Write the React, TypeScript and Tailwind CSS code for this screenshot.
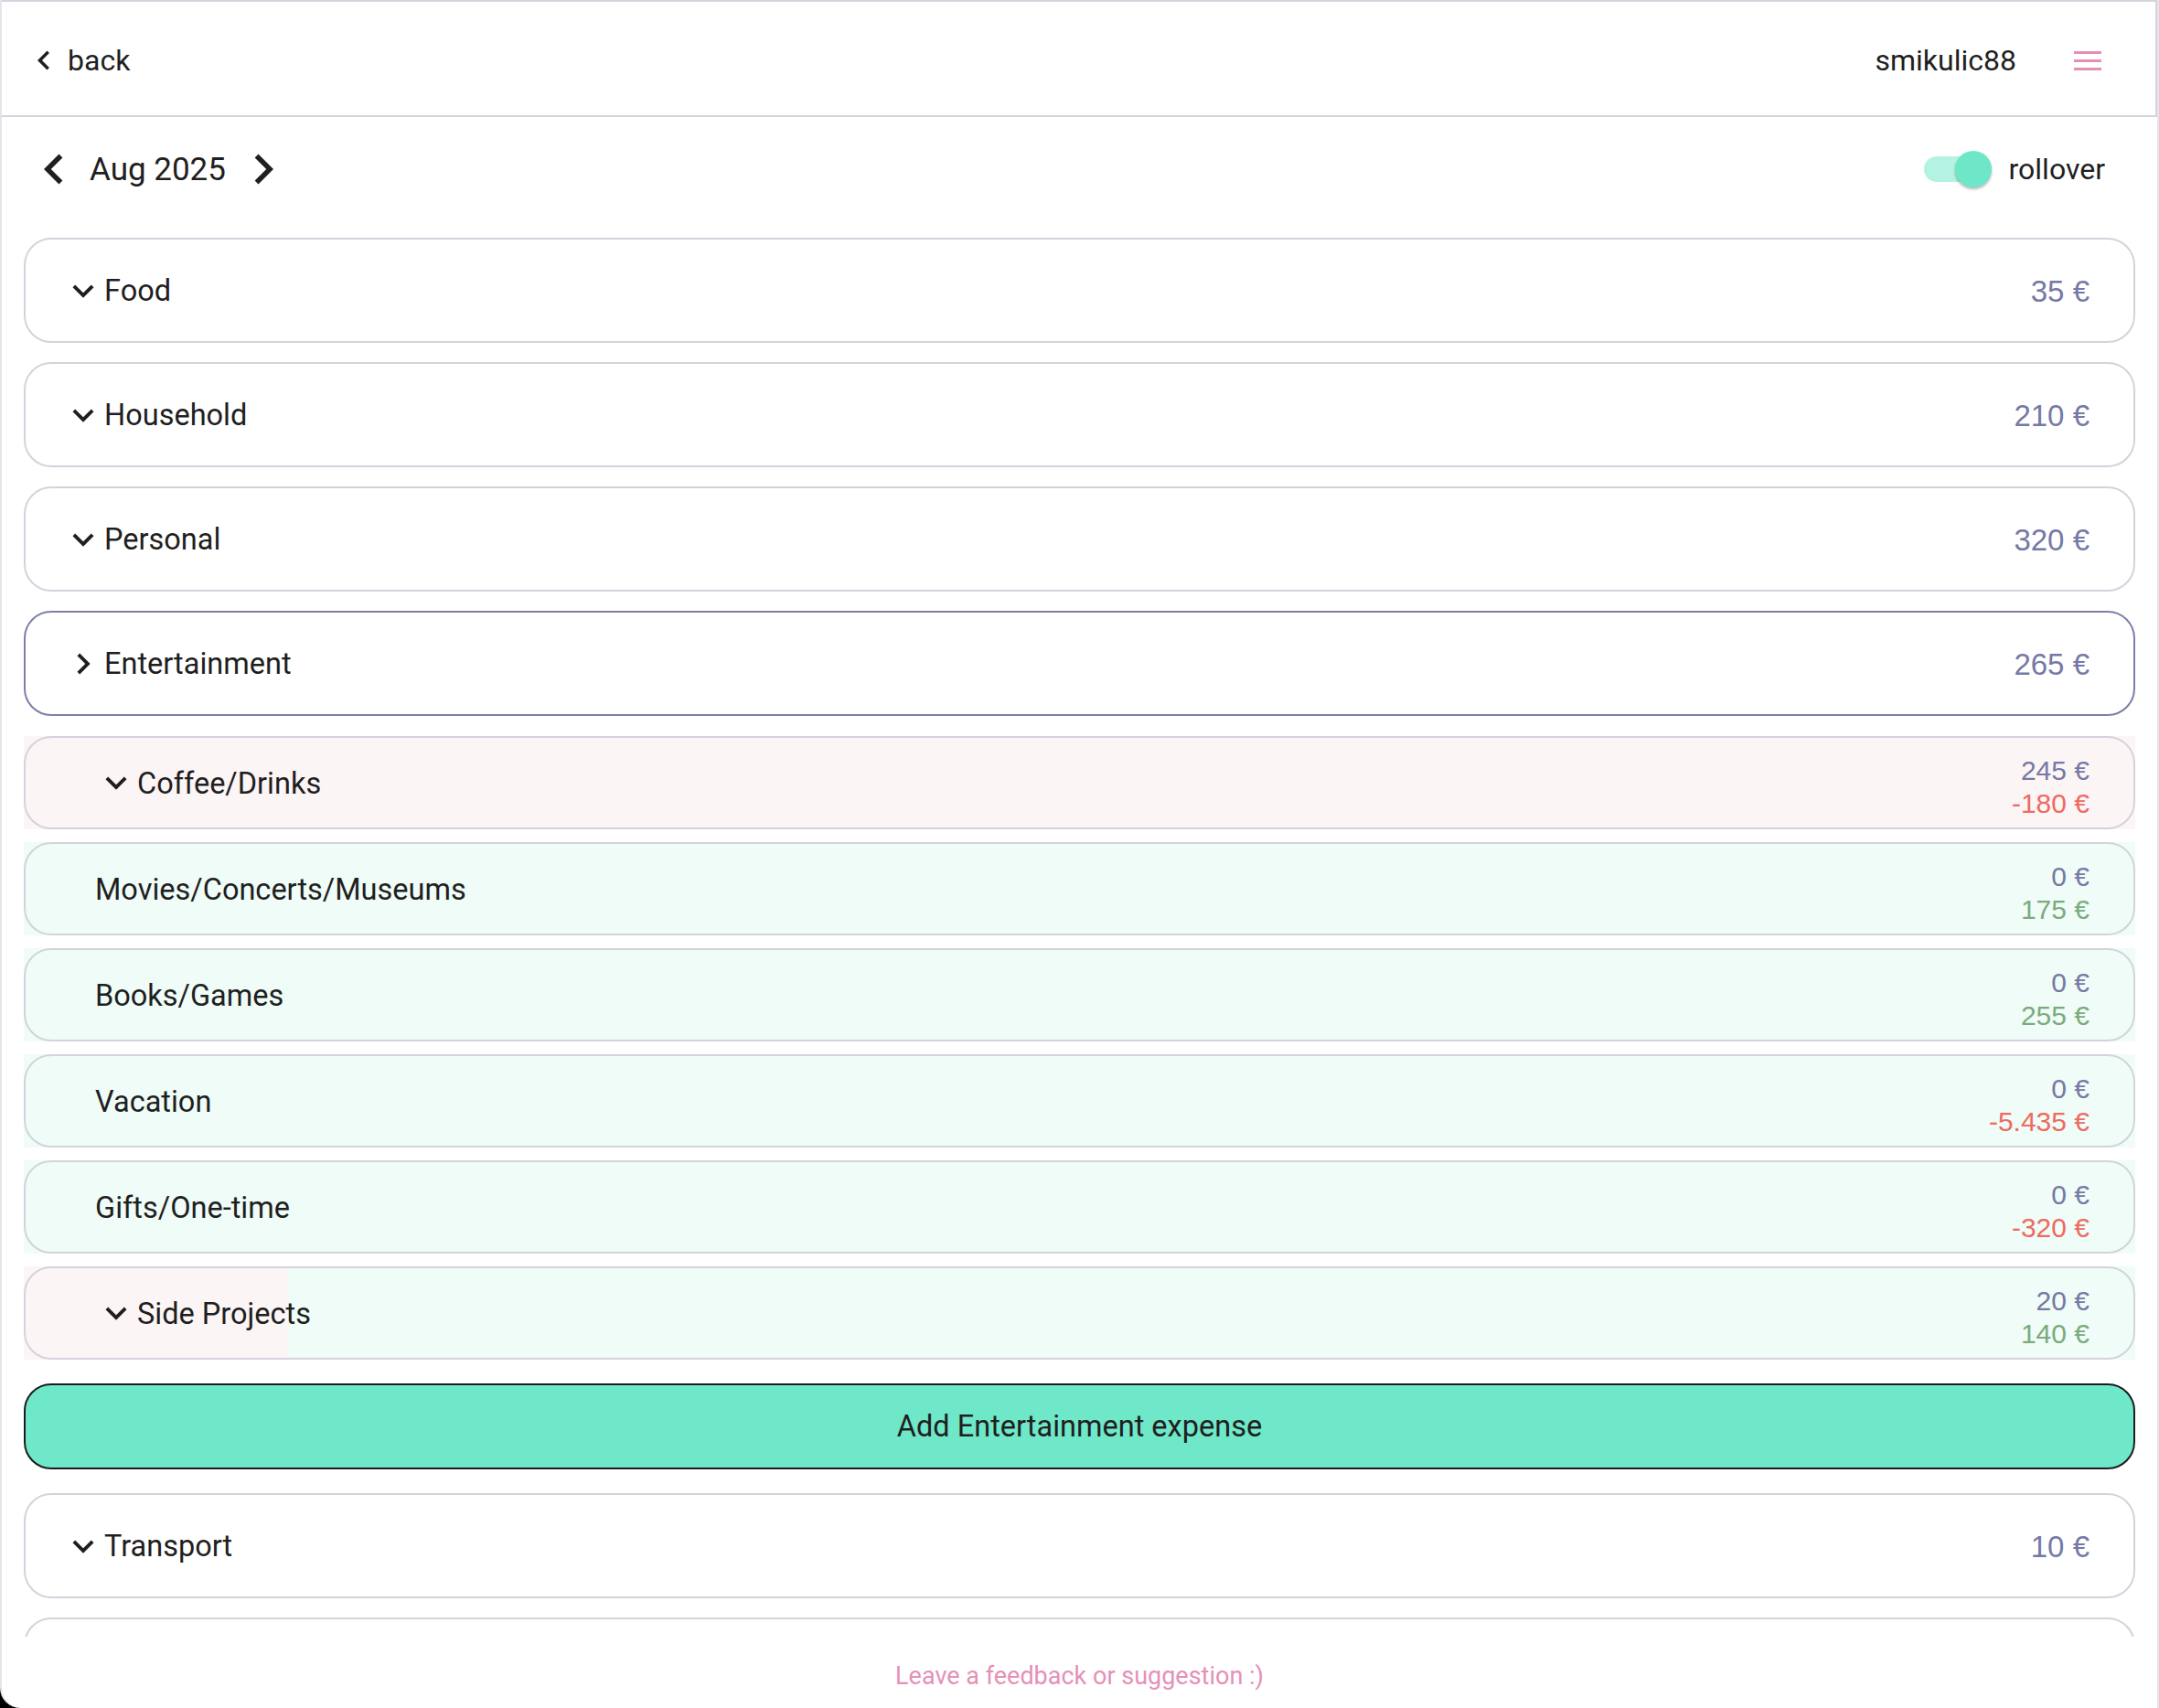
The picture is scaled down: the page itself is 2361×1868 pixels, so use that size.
import React from "react";

const ExpandMore = ({ className }: { className?: string }) => (
  <svg viewBox="0 0 24 24" className={className} fill="currentColor">
    <path d="M16.59 8.59 12 13.17 7.41 8.59 6 10l6 6 6-6z" />
  </svg>
);
const ChevronRight = ({ className }: { className?: string }) => (
  <svg viewBox="0 0 24 24" className={className} fill="currentColor">
    <path d="M10 6 8.59 7.41 13.17 12l-4.58 4.59L10 18l6-6z" />
  </svg>
);
const ChevronLeft = ({ className }: { className?: string }) => (
  <svg viewBox="0 0 24 24" className={className} fill="currentColor">
    <path d="M15.41 7.41 14 6l-6 6 6 6 1.41-1.41L10.83 12z" />
  </svg>
);

const roboto = { fontFamily: "Roboto, 'Noto Sans', sans-serif" };

type Main = { name?: string; amount?: string; open?: boolean };

const MainCard = ({ name, amount, open }: Main) => (
  <div
    className={`h-[115px] shrink-0 rounded-[30px] border-2 ${
      open ? "border-[#7c7fa9]" : "border-[#d3d3dd]"
    } bg-white flex items-center pl-[40px] pr-[48px]`}
  >
    {name && (
      <>
        {open ? (
          <ChevronRight className="w-[46px] h-[46px] text-[#1f1f1f]" />
        ) : (
          <ExpandMore className="w-[46px] h-[46px] text-[#1f1f1f]" />
        )}
        <span className="pt-[2px] text-[32.5px] text-[#1f1f1f]">{name}</span>
        <span className="ml-auto pt-[2px] font-['Liberation_Sans',Arial,sans-serif] text-[33px] text-[#7679a5]">
          {amount}
        </span>
      </>
    )}
  </div>
);

type Sub = {
  name: string;
  spent: string;
  left: string;
  leftColor: "red" | "green";
  chevron?: boolean;
  pinkPct: number;
};

const SubCard = ({ name, spent, left, leftColor, chevron, pinkPct }: Sub) => (
  <div
    className="h-[102px] shrink-0"
    style={{
      background: `linear-gradient(to right, #fcf5f5 0%, #fcf5f5 ${pinkPct}%, #effcf7 ${pinkPct}%, #effcf7 100%)`,
    }}
  >
    <div className="h-full rounded-[30px] border-2 border-[#d3d3dd] flex items-center pl-[76px] pr-[48px]">
      {chevron && <ExpandMore className="w-[46px] h-[46px] text-[#1f1f1f]" />}
      <span className="pt-[2px] text-[32.5px] text-[#1f1f1f]">{name}</span>
      <div className="ml-auto pt-[10px] flex flex-col items-end font-['Liberation_Sans',Arial,sans-serif] text-[30px] leading-[36px]">
        <span className="text-[#7679a5]">{spent}</span>
        <span className={leftColor === "red" ? "text-[#ee6a62]" : "text-[#7bab7b]"}>{left}</span>
      </div>
    </div>
  </div>
);

export default function App() {
  const subs: Sub[] = [
    { name: "Coffee/Drinks", spent: "245 €", left: "-180 €", leftColor: "red", chevron: true, pinkPct: 100 },
    { name: "Movies/Concerts/Museums", spent: "0 €", left: "175 €", leftColor: "green", pinkPct: 0 },
    { name: "Books/Games", spent: "0 €", left: "255 €", leftColor: "green", pinkPct: 0 },
    { name: "Vacation", spent: "0 €", left: "-5.435 €", leftColor: "red", pinkPct: 0 },
    { name: "Gifts/One-time", spent: "0 €", left: "-320 €", leftColor: "red", pinkPct: 0 },
    { name: "Side Projects", spent: "20 €", left: "140 €", leftColor: "green", chevron: true, pinkPct: 12.5 },
  ];

  return (
    <div className="w-[2361px] h-[1868px] bg-black" style={roboto}>
      <div className="w-full h-full bg-white rounded-bl-[22px] border-l-2 border-r-2 border-[#e4e4ec] flex flex-col overflow-hidden">
        {/* Header */}
        <header className="h-[128px] shrink-0 border-2 border-l-0 border-[#d4d4de] flex items-center justify-between pl-[25px] pr-[59px] pt-[4px]">
          <div className="flex items-center">
            <ChevronLeft className="w-[42px] h-[42px] text-[#1f1f1f]" />
            <span className="ml-[5px] text-[32px] text-[#1f1f1f]">back</span>
          </div>
          <div className="flex items-center">
            <span className="text-[32px] text-[#1f1f1f]">smikulic88</span>
            <div className="ml-[63px] flex flex-col gap-[6px]">
              <div className="w-[30px] h-[3px] bg-[#e48fb6]" />
              <div className="w-[30px] h-[3px] bg-[#e48fb6]" />
              <div className="w-[30px] h-[3px] bg-[#e48fb6]" />
            </div>
          </div>
        </header>

        {/* Month row */}
        <div className="h-[113px] shrink-0 flex items-center justify-between pl-[24px] pr-[57px]">
          <div className="flex items-center">
            <ChevronLeft className="w-[66px] h-[66px] text-[#1f1f1f]" />
            <span className="ml-[6px] mr-[8px] pt-[3px] text-[35px] text-[#1f1f1f]">Aug 2025</span>
            <ChevronRight className="w-[66px] h-[66px] text-[#1f1f1f]" />
          </div>
          <div className="flex items-center">
            <div className="relative w-[74px] h-[40px] flex items-center">
              <div className="w-[68px] h-[28px] rounded-full bg-[#b4f3e2]" />
              <div className="absolute right-0 top-0 w-[40px] h-[40px] rounded-full bg-[#6ee7c8] shadow-[0_2px_3px_rgba(0,0,0,0.28)]" />
            </div>
            <span className="ml-[19px] text-[32px] text-[#1f1f1f]">rollover</span>
          </div>
        </div>

        {/* List */}
        <div className="flex-1 overflow-hidden px-[24px] pt-[19px] flex flex-col">
          <div className="flex flex-col gap-[21px]">
            <MainCard name="Food" amount="35 €" />
            <MainCard name="Household" amount="210 €" />
            <MainCard name="Personal" amount="320 €" />
            <MainCard name="Entertainment" amount="265 €" open />
          </div>
          <div className="mt-[22px] flex flex-col gap-[14px]">
            {subs.map((s) => (
              <SubCard key={s.name} {...s} />
            ))}
          </div>
          <button className="mt-[26px] h-[94px] shrink-0 rounded-[30px] border-2 border-[#1c1c1c] bg-[#6fe8c9] text-[32.5px] text-[#1f1f1f] flex items-center justify-center">
            Add Entertainment expense
          </button>
          <div className="mt-[26px] flex flex-col gap-[21px]">
            <MainCard name="Transport" amount="10 €" />
            <MainCard />
          </div>
        </div>

        {/* Footer */}
        <div className="h-[78px] shrink-0 flex items-center justify-center pt-[8px]">
          <span className="text-[27px] text-[#e690b8]">Leave a feedback or suggestion :)</span>
        </div>
      </div>
    </div>
  );
}
